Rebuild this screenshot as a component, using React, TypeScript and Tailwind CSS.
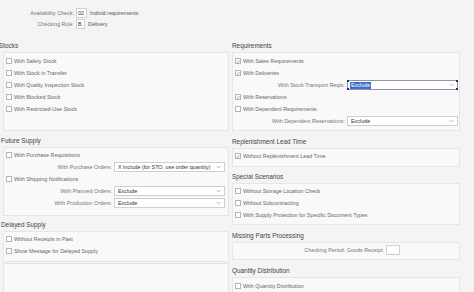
import React from 'react';

const font = { fontFamily: '"Liberation Sans", Arial, sans-serif' };

const Check: React.FC<{ checked?: boolean }> = ({ checked }) => (
  <span className="w-[6px] h-[6px] border border-[#b5b5b5] bg-white flex items-center justify-center shrink-0">
    {checked && (
      <svg width="5" height="5" viewBox="0 0 10 10">
        <polyline points="1.5,5.5 4,8 8.5,2" fill="none" stroke="#4a6fa5" strokeWidth="1.6" />
      </svg>
    )}
  </span>
);

const CheckRow: React.FC<{ label: string; checked?: boolean }> = ({ label, checked }) => (
  <div className="h-[12px] flex items-center pl-[2px] gap-[2px]">
    <Check checked={checked} />
    <span className="text-[5.4px] text-[#666] whitespace-nowrap">{label}</span>
  </div>
);

const Chevron = () => (
  <svg width="5" height="4" viewBox="0 0 10 6" className="mr-[3px]">
    <polyline points="1,1 5,5 9,1" fill="none" stroke="#999" strokeWidth="1.2" />
  </svg>
);

const SelectRow: React.FC<{ label: string; value: string; focused?: boolean; labelW: string }> = ({
  label,
  value,
  focused,
  labelW,
}) => (
  <div className="h-[12px] flex items-center gap-[2px]">
    <span className={`${labelW} text-right text-[5.4px] text-[#777] whitespace-nowrap`}>{label}</span>
    {focused ? (
      <div className="relative w-[111px] h-[10px] bg-white border border-[#8a96b0] flex items-center justify-between">
        <span className="ml-[2px] px-[1px] text-[5.4px] leading-[7px] bg-[#3d6fc6] text-white">{value}</span>
        <Chevron />
        <span className="absolute -left-[1px] -top-[1px] w-[2px] h-[2px] bg-[#333]" />
        <span className="absolute -right-[1px] -top-[1px] w-[2px] h-[2px] bg-[#333]" />
        <span className="absolute -left-[1px] -bottom-[1px] w-[2px] h-[2px] bg-[#333]" />
        <span className="absolute -right-[1px] -bottom-[1px] w-[2px] h-[2px] bg-[#333]" />
      </div>
    ) : (
      <div className="w-[111px] h-[10px] bg-white border border-[#cfcfcf] flex items-center justify-between">
        <span className="ml-[3px] text-[5.4px] text-[#333] whitespace-nowrap">{value}</span>
        <Chevron />
      </div>
    )}
  </div>
);

const Heading: React.FC<{ title: string; className?: string }> = ({ title, className = '' }) => (
  <div className={`h-[12px] flex items-center text-[6.4px] text-[#444] whitespace-nowrap ${className}`}>{title}</div>
);

const Panel: React.FC<{ className: string; children?: React.ReactNode }> = ({ className, children }) => (
  <div className={`border border-[#e6e6e6] bg-[#f9f9f9] ${className}`}>{children}</div>
);

export default function App() {
  return (
    <div className="w-[474px] h-[292px] overflow-hidden bg-[#f4f4f4]" style={font}>
      <div className="h-[40px] pt-[8px] flex flex-col gap-[1px]">
        <div className="h-[10px] flex items-center gap-[2px]">
          <span className="w-[74px] text-right text-[5.4px] text-[#777]">Availability Check:</span>
          <span className="w-[11px] h-[10px] bg-white border border-[#cfcfcf] text-[5.4px] text-[#333] flex items-center pl-[1px]">02</span>
          <span className="ml-[1px] text-[5.4px] text-[#555]">Individ.requirements</span>
        </div>
        <div className="h-[10px] flex items-center gap-[2px]">
          <span className="w-[74px] text-right text-[5.4px] text-[#777]">Checking Rule:</span>
          <span className="w-[9px] h-[10px] bg-white border border-[#cfcfcf] text-[5.4px] text-[#333] flex items-center pl-[1px]">B</span>
          <span className="ml-[1px] text-[5.4px] text-[#555]">Delivery</span>
        </div>
      </div>

      <div className="flex">
        <div className="w-[229px] flex flex-col">
          <Heading title="Stocks" className="-ml-[1px]" />
          <Panel className="ml-[3px] h-[79px] pt-[2px]">
            <CheckRow label="With Safety Stock" />
            <CheckRow label="With Stock in Transfer" />
            <CheckRow label="With Quality Inspection Stock" />
            <CheckRow label="With Blocked Stock" />
            <CheckRow label="With Restricted-Use Stock" />
          </Panel>

          <Heading title="Future Supply" className="mt-[4px] ml-[1px]" />
          <Panel className="ml-[3px] h-[69px] pt-[1px]">
            <CheckRow label="With Purchase Requisitions" />
            <SelectRow labelW="w-[108px]" label="With Purchase Orders:" value="X Include (for STO, use order quantity)" />
            <CheckRow label="With Shipping Notifications" />
            <SelectRow labelW="w-[108px]" label="With Planned Orders:" value="Exclude" />
            <SelectRow labelW="w-[108px]" label="With Production Orders:" value="Exclude" />
          </Panel>

          <Heading title="Delayed Supply" className="mt-[3px] ml-[1px]" />
          <Panel className="ml-[3px] h-[31px] pt-[1px]">
            <CheckRow label="Without Receipts in Past" />
            <CheckRow label="Show Message for Delayed Supply" />
          </Panel>
          <Panel className="ml-[3px] mt-[1px] h-[30px]" />
        </div>

        <div className="ml-[3px] w-[228px] flex flex-col">
          <Heading title="Requirements" />
          <Panel className="h-[79px] pt-[2px]">
            <CheckRow label="With Sales Requirements" checked />
            <CheckRow label="With Deliveries" checked />
            <SelectRow labelW="w-[112px]" label="With Stock Transport Reqts:" value="Exclude" focused />
            <CheckRow label="With Reservations" checked />
            <CheckRow label="With Dependent Requirements" />
            <SelectRow labelW="w-[112px]" label="With Dependent Reservations:" value="Exclude" />
          </Panel>

          <Heading title="Replenishment Lead Time" className="mt-[5px]" />
          <Panel className="h-[19px] pt-[1px]">
            <CheckRow label="Without Replenishment Lead Time" checked />
          </Panel>

          <Heading title="Special Scenarios" className="mt-[4px]" />
          <Panel className="h-[42px] pt-[1px]">
            <CheckRow label="Without Storage Location Check" />
            <CheckRow label="Without Subcontracting" />
            <CheckRow label="With Supply Protection for Specific Document Types" />
          </Panel>

          <Heading title="Missing Parts Processing" className="mt-[5px]" />
          <Panel className="h-[18px] pt-[1px]">
            <div className="h-[12px] flex items-center gap-[2px]">
              <span className="w-[151px] text-right text-[5.4px] text-[#777] whitespace-nowrap">Checking Period: Goods Receipt:</span>
              <span className="w-[14px] h-[10px] bg-white border border-[#cfcfcf]" />
            </div>
          </Panel>

          <Heading title="Quantity Distribution" className="mt-[5px]" />
          <Panel className="h-[30px] pt-[2px]">
            <CheckRow label="With Quantity Distribution" />
          </Panel>
        </div>
      </div>
    </div>
  );
}
